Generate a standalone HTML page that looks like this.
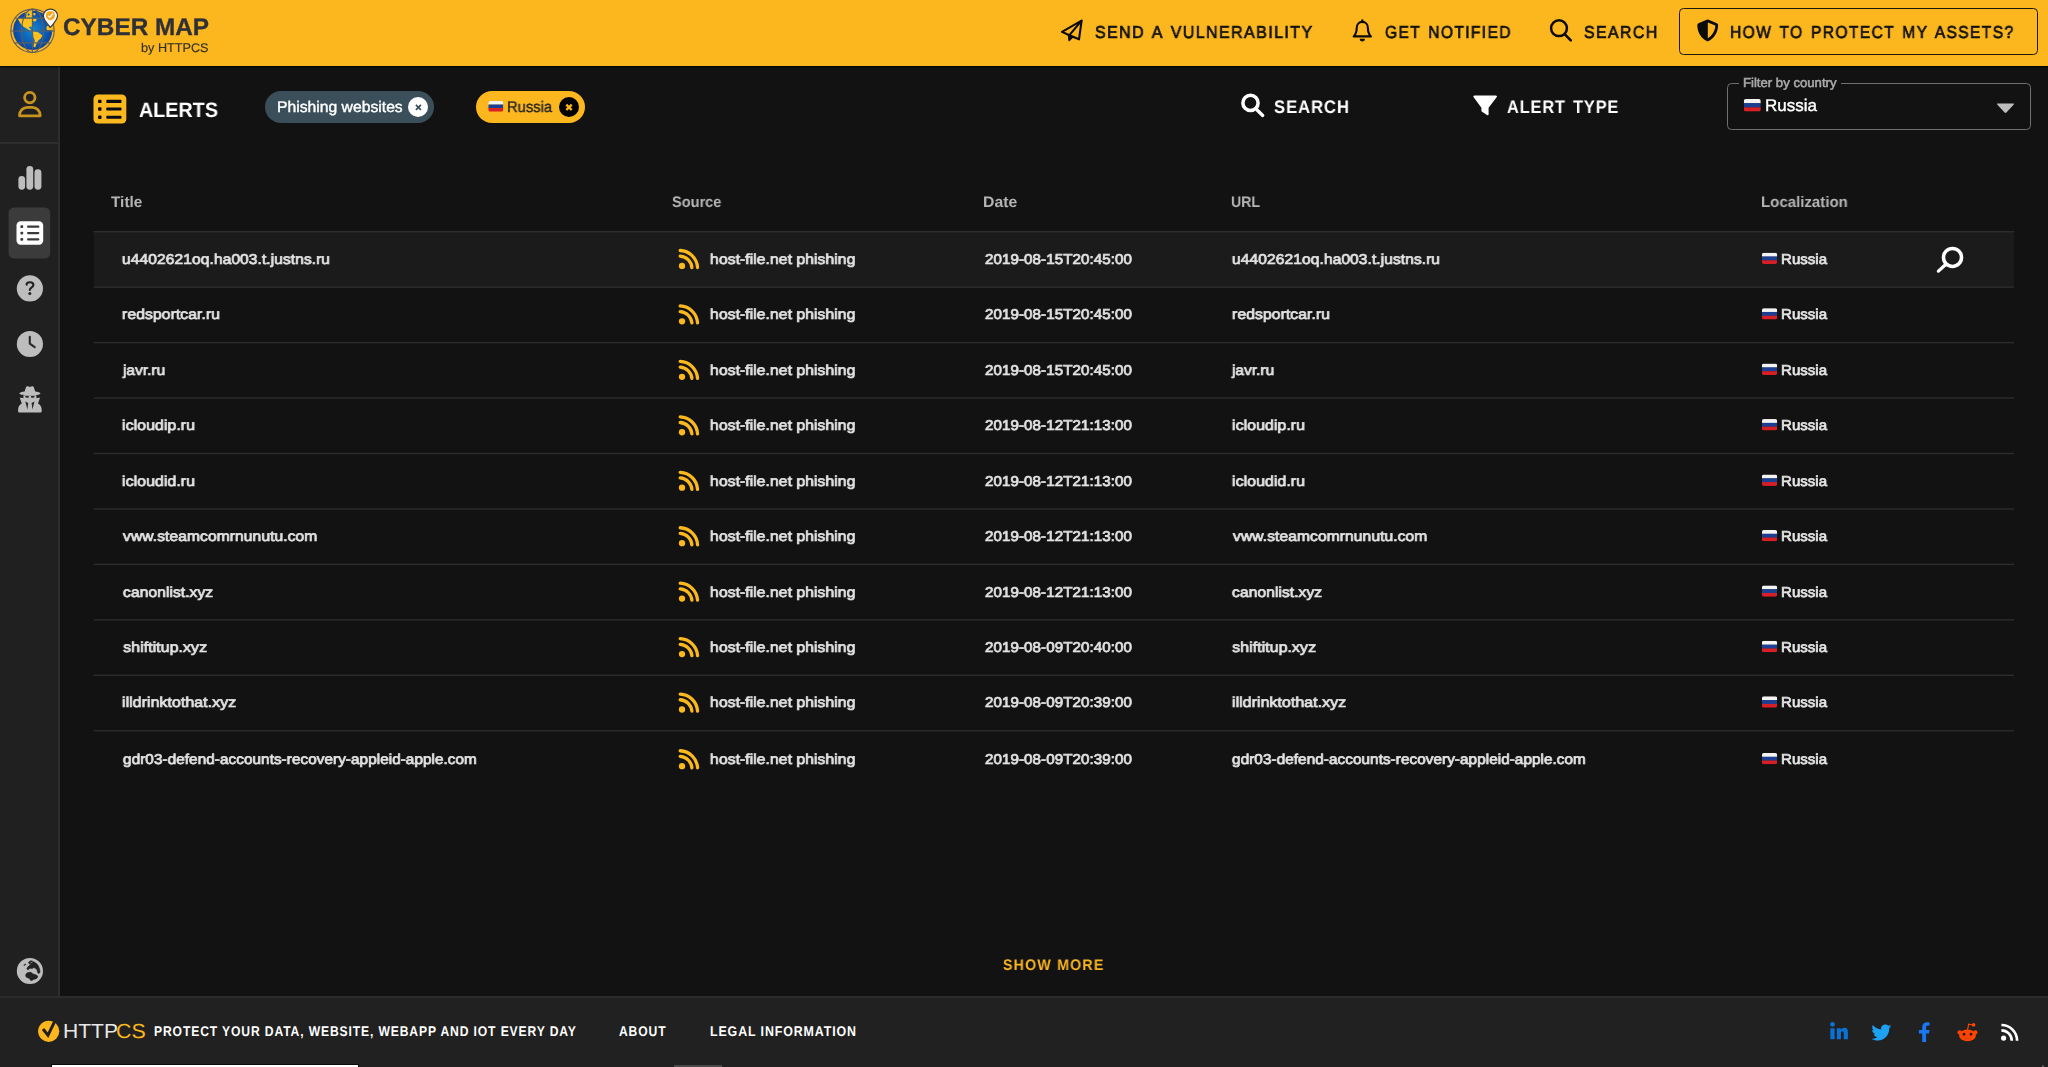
<!DOCTYPE html>
<html lang="en"><head><meta charset="utf-8"><title>Cyber Map - Alerts</title>
<style>
*{box-sizing:border-box}
html,body{margin:0;padding:0}
body{width:2048px;height:1067px;overflow:hidden;background:#121212;font-family:"Liberation Sans",sans-serif;position:relative}
.t{position:absolute;white-space:nowrap;line-height:1;transform-origin:0 50%;font-family:"Liberation Sans",sans-serif;text-rendering:geometricPrecision}
.g{will-change:transform}
.abs{position:absolute}
svg{position:absolute;overflow:visible}
#header{left:0;top:0;width:2048px;height:65.5px;background:#fcb61e;box-shadow:0 1px 2px rgba(0,0,0,.9)}
#sidebar{left:0;top:66px;width:60px;height:931px;background:#202020;border-right:2px solid #2d2d2d}
#sidesep{left:0;top:142.2px;width:58px;height:1.9px;background:#2e2e2e}
#sideact{left:9px;top:208px;width:41px;height:50px;background:#3a3a3a;border-radius:5px}
#footer{left:0;top:996px;width:2048px;height:71px;background:#212121;border-top:2px solid #2c2c2c}
#hbtn{left:1679px;top:8px;width:358.5px;height:47px;border:1.3px solid #1d1808;border-radius:4.5px}
.chip{height:32px;border-radius:16px;top:91px}
#chip1{left:265.3px;width:169.2px;background:#3b4f5b}
#chip2{left:476.3px;width:109px;background:#fcb61e}
.cx{width:20px;height:20px;border-radius:50%;top:97.3px}
#cx1{left:408.4px;background:#fff}
#cx2{left:559px;background:#000}
#sel{left:1727px;top:83.2px;width:304.2px;height:46.5px;border:1.2px solid #707070;border-radius:4.5px}
#selgap{left:1739px;top:80px;width:102px;height:6px;background:#121212}
.row{left:93.7px;width:1920.3px;height:1.7px;background:#292929}
#rowhov{left:93.7px;top:231.7px;width:1920.3px;height:55px;background:#1b1b1b}
#wbar{left:51.5px;top:1064.6px;width:306.5px;height:3px;background:#fff;box-shadow:0 0 0 1px #0b0b0b}
#gbar{left:674px;top:1065px;width:47.5px;height:3px;background:#4a4a4a}
#tick{left:2042.3px;top:1064.6px;width:2.1px;height:3px;background:#555}

</style></head>
<body>
<div class="abs" id="sidebar"></div>
<div class="abs" id="sidesep"></div>
<div class="abs" id="footer"></div>
<div class="abs" id="header"></div>
<div class="abs" id="hbtn"></div>
<div class="abs chip" id="chip1"></div>
<div class="abs chip" id="chip2"></div>
<div class="abs cx" id="cx1"></div>
<div class="abs cx" id="cx2"></div>
<div class="abs" id="sel"></div>
<div class="abs" id="selgap"></div>
<div class="abs" id="rowhov"></div>
<div class="abs" id="wbar"></div>
<div class="abs" id="gbar"></div>
<div class="abs" id="tick"></div>

<svg width="2048" height="1067" viewBox="0 0 2048 1067" style="left:0;top:0">
<defs>
<radialGradient id="gb" cx="0.5" cy="0.5" r="0.55"><stop offset="0" stop-color="#1486d3"/><stop offset="0.55" stop-color="#0b62b8"/><stop offset="1" stop-color="#0a3c98"/></radialGradient>
<clipPath id="gc"><circle cx="32.7" cy="30.3" r="19.6"/></clipPath>
</defs>
<!-- ===== header globe logo ===== -->
<g id="logo">
<circle cx="32.7" cy="30.3" r="19.6" fill="url(#gb)"/>
<g clip-path="url(#gc)" fill="#fcc11d">
<path d="M17.6 18.6 L19.6 18.3 L32.2 18.2 L32.2 26.8 L30.4 26.4 L28.8 27.2 L31.1 29.8 L30.5 30.8 L26.5 28.5 L23.6 26.8 L20.8 24 Z"/>
<path d="M24.9 13 L27.6 11.4 L30.2 10.2 L32.2 10.3 L32.2 17.4 L25.6 17.4 L26.6 15.2 Z"/>
<circle cx="28.6" cy="14.6" r="1.1" fill="#0b55ad"/>
<path d="M33.2 18.4 L36.8 19 L35.6 21.6 L33.2 21.2 Z"/>
<path d="M33.4 12.8 L35.8 13.4 L35 15.4 L33.2 15 Z"/>
<path d="M33 31.3 L37.5 32.1 L42.4 35.2 L41 38.2 L38.3 40.6 L36.4 44 L35.2 47.4 L33.6 46.8 L33.8 43.6 L34.8 40.6 L33.4 37 Z"/>
<path d="M47 26 L49.5 25 L53 27.5 L53 30.3 L47 30.3 L46.3 28 Z"/>
</g>
<g fill="none" stroke="#5e5e5e" stroke-width="1.1">
<circle cx="32.5" cy="30.8" r="21.7"/>
<ellipse cx="32.5" cy="30.8" rx="10.9" ry="21.7"/>
<path d="M32.4 9.1 V52.5 M10.8 31 H54.2 M15.2 18.3 H49.8 M15.2 42.9 H49.8"/>
</g>
<path d="M50.4 9.1 C54.3 9.1 57.5 12 57.5 15.9 C57.5 19.4 54.5 22.5 50.3 27.4 C46.2 22.5 43.4 19.4 43.4 15.9 C43.4 12 46.5 9.1 50.4 9.1 Z" fill="#fff" stroke="#3a3833" stroke-width="1.2"/>
<circle cx="50.4" cy="15.6" r="4.6" fill="#f7a823"/>
<path d="M48 15.6 L49.8 17.4 L52.9 13.7" fill="none" stroke="#fff" stroke-width="1.3"/>
</g>
<!-- ===== header nav icons ===== -->
<g fill="none" stroke="#0b0b0b" stroke-width="2.1" stroke-linejoin="round" stroke-linecap="round">
<path d="M1081.6 20.6 L1062 31.9 L1069.4 35.2 L1079 39.3 Z"/>
<path d="M1081.4 20.9 L1069.4 35.2"/>
<path d="M1068.4 35 L1069 40.7 L1072.8 37" fill="#111" stroke-width="1.2"/>
<path d="M1353.7 36.4 C1355.6 34.5 1356.7 32 1356.7 28 C1356.7 24.5 1359 21.9 1362.3 21.9 C1365.6 21.9 1367.9 24.5 1367.9 28 C1367.9 32 1369 34.5 1370.9 36.4 Z"/>
<path d="M1362.3 20.4 V22" stroke-width="2.3"/>
<circle cx="1559" cy="28.2" r="7.9" stroke-width="2.5"/>
<path d="M1564.9 34.4 L1570.8 40.4" stroke-width="2.6"/>
</g>
<path d="M1359.7 38.8 H1364.9 A2.6 2.6 0 0 1 1359.7 38.8 Z" fill="#111"/>
<path fill-rule="evenodd" fill="#0b0b0b" d="M1707.7 19.6 Q1708.2 19.6 1708.7 19.8 L1716.9 23.3 Q1718.1 23.9 1718.1 25.3 C1718.1 33.2 1713.2 38.9 1708.7 41.1 Q1707.7 41.5 1706.7 41.1 C1702.2 38.9 1697.3 33.2 1697.3 25.3 Q1697.3 23.9 1698.5 23.3 L1706.7 19.8 Q1707.2 19.6 1707.7 19.6 Z M1707.8 22.6 V38.4 C1711.6 36.2 1715.1 31.6 1715.3 25.6 Z"/>
<!-- ===== sidebar icons ===== -->
<g fill="none" stroke="#c8931f" stroke-width="2.8" stroke-linejoin="round">
<circle cx="29.8" cy="97.6" r="5.2"/>
<path d="M19.5 115.8 C19.5 110.6 23.4 107.3 27.4 107.3 L32.3 107.3 C36.3 107.3 40.2 110.6 40.2 115.8 Z"/>
</g>
<g fill="#bdbdbd">
<rect x="18.4" y="176" width="6.7" height="13.7" rx="3.35"/>
<rect x="26.4" y="165.9" width="6.8" height="23.8" rx="3.4"/>
<rect x="34.5" y="169.3" width="6.9" height="20.4" rx="3.45"/>
</g>
<!-- list active -->
<rect x="8.6" y="207.4" width="41.6" height="51.2" rx="5.5" fill="#3b3b3b"/>
<rect x="16.5" y="221.2" width="26.7" height="23.6" rx="4.2" fill="#fff"/>
<g fill="#3a3a3a">
<rect x="20.4" y="225.3" width="2.8" height="2.7" rx="0.8"/><rect x="20.4" y="231.7" width="2.8" height="2.7" rx="0.8"/><rect x="20.4" y="238.1" width="2.8" height="2.7" rx="0.8"/>
<rect x="27" y="225.5" width="12.4" height="2.3" rx="1.1"/><rect x="27" y="231.9" width="12.4" height="2.3" rx="1.1"/><rect x="27" y="238.3" width="12.4" height="2.3" rx="1.1"/>
</g>
<!-- question -->
<circle cx="29.9" cy="288.4" r="13.1" fill="#bdbdbd"/>
<path d="M26.6 284.6 C26.8 281.6 33.4 281.4 33.4 285 C33.4 287.4 29.8 287.4 29.8 290" fill="none" stroke="#222" stroke-width="2.1" stroke-linecap="round"/>
<circle cx="29.8" cy="293.6" r="1.5" fill="#222"/>
<!-- clock -->
<circle cx="29.9" cy="344" r="13.1" fill="#bdbdbd"/>
<path d="M29.8 336.8 V343.7 L34.7 347.2" fill="none" stroke="#2a2a2a" stroke-width="2.1" stroke-linecap="round" stroke-linejoin="round"/>
<!-- user secret -->
<g fill="#bdbdbd">
<path d="M24.6 391.6 L25.9 387.4 Q26.4 385.8 27.9 386.3 L29.9 387 L31.9 386.3 Q33.4 385.8 33.9 387.4 L35.2 391.6 C37.6 392 40.4 392.6 40.4 393.5 C40.4 394.7 35 395.4 29.9 395.4 C24.8 395.4 19.4 394.7 19.4 393.5 C19.4 392.6 22.2 392 24.6 391.6 Z"/>
<path d="M23.4 395.2 H36.4 V398 C36.4 401.5 33.6 403.6 29.9 403.6 C26.2 403.6 23.4 401.5 23.4 398 Z"/>
<path d="M19.8 397.8 L23.4 398 L26 401.5 L29.9 402.5 L33.8 401.5 L36.4 398 L40 397.8 L38 403.4 C40.3 404.6 41.7 407 41.7 409.6 V411.2 Q41.7 412.5 40.4 412.5 H19.4 Q18.1 412.5 18.1 411.2 V409.6 C18.1 407 19.5 404.6 21.8 403.4 Z"/>
</g>
<path d="M25.4 396 H28.8 V397.2 Q27.4 398.2 25.4 397.2 Z M31 396 H34.4 V397.2 Q32.4 398.2 31 397.2 Z" fill="#2a2a2a"/>
<path d="M25.3 401.6 L28.2 403 L27.4 409.5 Z M34.5 401.6 L31.6 403 L32.4 409.5 Z" fill="#262626"/>
<!-- bottom globe -->
<circle cx="29.9" cy="971" r="13.1" fill="#bdbdbd"/>
<g fill="#222" stroke="#222" stroke-width="0.6" stroke-linejoin="round">
<path d="M25.7 975 C26 973.6 27 972.8 27.6 972.7 C28.8 972.2 30 972.1 31 972.4 C32 972.8 32.4 973.6 33.2 973.9 C34.2 974.3 35.4 974.4 36.2 975 C37 975.4 37.8 975.8 37.7 976.5 C37.6 977.6 37 978.3 36.2 978.7 C35.2 979.2 34 979 33.2 979.5 C32.6 980 32.4 980.6 31.7 980.6 C31 980.6 30.5 980.4 30.2 979.9 C29.9 979.4 30 978.8 29.5 978.4 C28.6 977.9 27.4 977.8 26.5 977.2 C25.9 976.7 25.5 975.8 25.7 975 Z"/>
<path d="M28.7 962.2 C29.4 961.4 30.2 960.9 31 960.7 C32 960.9 33 961.3 34 961.9 C35.2 962.5 36.2 963.2 37 964.1 C38 965.2 38.8 966.5 39.2 967.9 C39.7 969.2 40 970.6 40 972 C39.8 972.8 39.4 973.4 38.9 973.5 C38.2 973.3 37.6 972.8 37.4 972 C37.2 971.2 37.4 970.4 37 969.7 C36.6 969.1 36 968.9 35.5 968.6 C35 968.2 34.6 967.6 34 967.5 C33.3 967.5 32.8 968.4 32.1 968.6 C31.5 968.7 30.8 968.1 30.2 968.2 C29.4 968.5 28.8 969.8 28 969.7 C27.2 969.5 26.7 969.1 26.9 968.6 C27.2 967.6 28 966.8 28.7 966 C29.5 965.2 30.5 964.5 31 963.7 C30.2 963.6 29.4 964 28.9 963.5 C28.5 963.1 28.5 962.6 28.7 962.2 Z"/>
<path d="M23.6 965 L25.4 963.8 L26 964.5 L24.2 965.7 Z" stroke-width="0.3"/>
</g>
<path d="M30.6 962.8 L32.6 961.9" stroke="#bdbdbd" stroke-width="0.7" fill="none"/>
<!-- ===== toolbar ===== -->
<rect x="93.5" y="94.5" width="32.8" height="29" rx="4.6" fill="#fcb91f"/>
<g fill="#0b0d16">
<rect x="98.1" y="99.7" width="3.4" height="3.4" rx="0.7"/><rect x="98.1" y="107.35" width="3.4" height="3.4" rx="0.7"/><rect x="98.1" y="115.6" width="3.4" height="3.4" rx="0.7"/>
<rect x="106.3" y="99.85" width="15.2" height="3.1" rx="0.8"/><rect x="106.3" y="107.5" width="15.2" height="3.1" rx="0.8"/><rect x="106.3" y="115.75" width="15.2" height="3.1" rx="0.8"/>
</g>
<g fill="none" stroke="#fff" stroke-linecap="round">
<circle cx="1250.5" cy="102.9" r="7.6" stroke-width="3.5"/>
<path d="M1256.6 109.6 L1262.7 115.4" stroke-width="3.4"/>
</g>
<path fill="#fff" d="M1474.6 95.6 H1495.7 Q1497.8 95.6 1496.6 97.3 L1488.6 107.7 V114.2 Q1488.6 116 1487 115 L1482 111.7 Q1481.4 111.3 1481.4 110.4 V107.7 L1473.7 97.3 Q1472.5 95.6 1474.6 95.6 Z"/>
<path fill="#bdbdbd" d="M1997.8 103.4 H2013.2 Q2014.8 103.4 2013.6 104.7 L2006.4 112.6 Q2005.5 113.5 2004.6 112.6 L1997.4 104.7 Q1996.2 103.4 1997.8 103.4 Z"/>
<!-- chip close x -->
<path d="M415.9 104.8 L420.9 109.8 M420.9 104.8 L415.9 109.8" stroke="#3b4f5b" stroke-width="1.7" fill="none"/>
<path d="M566.3 104.6 L571.7 110 M571.7 104.6 L566.3 110" stroke="#fcb61e" stroke-width="2.4" fill="none"/>
<!-- magnifier row1 -->
<g fill="none" stroke="#fff" stroke-linecap="round">
<circle cx="1952.5" cy="257.4" r="9" stroke-width="3.5"/>
<path d="M1945.4 264.7 L1938.4 271.1" stroke-width="3.3"/>
</g>
<!-- ===== footer ===== -->
<circle cx="48.7" cy="1031.3" r="10.6" fill="#fcb61e"/>
<path d="M43 1029 L48 1035.2 L54.6 1021.6" fill="none" stroke="#1f1f24" stroke-width="2.9"/>
<!-- linkedin -->
<g fill="#0a72d4">
<circle cx="1832.5" cy="1024.3" r="2.4"/>
<rect x="1830.4" y="1028.3" width="4.2" height="10.9"/>
<path d="M1836.9 1028.3 H1840.9 V1029.8 C1841.6 1028.6 1843 1027.8 1844.4 1027.8 C1847.2 1027.8 1847.9 1029.8 1847.9 1032.4 V1039.2 H1843.8 V1033.2 C1843.8 1032 1843.4 1031.2 1842.4 1031.2 C1841.4 1031.2 1840.9 1032 1840.9 1033.2 V1039.2 H1836.9 Z"/>
</g>
<!-- twitter -->
<path fill="#1da1f2" d="M1889.2 1028.3 C1889.2 1028.5 1889.2 1028.7 1889.2 1028.9 C1889.2 1034.3 1885.1 1040.5 1877.6 1040.5 C1875.3 1040.5 1873.2 1039.8 1871.4 1038.7 C1871.7 1038.7 1872 1038.8 1872.4 1038.8 C1874.3 1038.8 1876 1038.1 1877.4 1037 C1875.6 1037 1874.1 1035.8 1873.6 1034.2 C1874.2 1034.3 1874.8 1034.3 1875.4 1034.1 C1873.6 1033.7 1872.2 1032.1 1872.2 1030.1 C1872.7 1030.4 1873.4 1030.6 1874 1030.6 C1872.3 1029.4 1871.7 1027 1872.8 1025.1 C1874.8 1027.6 1877.8 1029.2 1881.2 1029.4 C1880.6 1026.8 1882.6 1024.4 1885.2 1024.4 C1886.4 1024.4 1887.4 1024.9 1888.2 1025.7 C1889.1 1025.5 1890 1025.2 1890.8 1024.7 C1890.5 1025.6 1889.9 1026.4 1889 1026.9 C1889.8 1026.8 1890.6 1026.6 1891.3 1026.3 C1890.8 1027.1 1890 1027.8 1889.2 1028.3 Z"/>
<!-- facebook -->
<path fill="#1877f2" d="M1922.2 1041.9 V1033.4 H1918.9 V1030.1 H1922.2 V1027.4 C1922.2 1024 1924.2 1022.2 1927.1 1022.2 C1928.2 1022.2 1929.1 1022.3 1929.6 1022.4 V1025.5 H1928 C1926.5 1025.5 1926.1 1026.3 1926.1 1027.3 V1030.1 H1929.5 L1929 1033.4 H1926.1 V1041.9 Z"/>
<!-- reddit -->
<g fill="#ff4500">
<ellipse cx="1967.5" cy="1035.4" rx="8.4" ry="5.9"/>
<circle cx="1959.6" cy="1032.4" r="2.1"/><circle cx="1975.4" cy="1032.4" r="2.1"/>
<circle cx="1973.6" cy="1024.9" r="1.8"/>
<path d="M1967.5 1030 L1968.7 1024.2 L1973 1025" fill="none" stroke="#ff4500" stroke-width="1.2"/>
</g>
<circle cx="1964" cy="1034.2" r="1.35" fill="#26140e"/><circle cx="1971" cy="1034.2" r="1.35" fill="#26140e"/>
<path d="M1964.4 1037.8 Q1967.5 1039.6 1970.6 1037.8" fill="none" stroke="#c93a08" stroke-width="0.9"/>
<!-- rss white -->
<g fill="none" stroke="#fff" stroke-width="2.7">
<path d="M2001.4 1025 A15.7 15.7 0 0 1 2017.1 1040.7"/>
<path d="M2001.4 1030.3 A10.4 10.4 0 0 1 2011.8 1040.7"/>
</g>
<circle cx="2003.6" cy="1038.1" r="2.6" fill="#fff"/>
<g transform="translate(0,0.0)"><g fill="none" stroke="#fcb91e" stroke-width="3.3" stroke-linecap="round"><path d="M680.2 250.52 A18.2 18.2 0 0 1 697.56 267.5"/><path d="M680.2 256.17 A12.56 12.56 0 0 1 691.9 267.5"/></g><circle cx="682" cy="265.9" r="3.15" fill="#fcb91e"/></g>
<g><clipPath id="fcr0"><rect x="1761.9" y="252.7" width="15.3" height="11.4" rx="2"/></clipPath><g clip-path="url(#fcr0)"><rect x="1761.9" y="252.7" width="15.3" height="4.00" fill="#f4f4f2"/><rect x="1761.9" y="256.50" width="15.3" height="4.00" fill="#1c3f94"/><rect x="1761.9" y="260.30" width="15.3" height="3.80" fill="#d91f26"/></g></g>
<g transform="translate(0,55.45)"><g fill="none" stroke="#fcb91e" stroke-width="3.3" stroke-linecap="round"><path d="M680.2 250.52 A18.2 18.2 0 0 1 697.56 267.5"/><path d="M680.2 256.17 A12.56 12.56 0 0 1 691.9 267.5"/></g><circle cx="682" cy="265.9" r="3.15" fill="#fcb91e"/></g>
<g><clipPath id="fcr1"><rect x="1761.9" y="308.15" width="15.3" height="11.4" rx="2"/></clipPath><g clip-path="url(#fcr1)"><rect x="1761.9" y="308.15" width="15.3" height="4.00" fill="#f4f4f2"/><rect x="1761.9" y="311.95" width="15.3" height="4.00" fill="#1c3f94"/><rect x="1761.9" y="315.75" width="15.3" height="3.80" fill="#d91f26"/></g></g>
<g transform="translate(0,110.9)"><g fill="none" stroke="#fcb91e" stroke-width="3.3" stroke-linecap="round"><path d="M680.2 250.52 A18.2 18.2 0 0 1 697.56 267.5"/><path d="M680.2 256.17 A12.56 12.56 0 0 1 691.9 267.5"/></g><circle cx="682" cy="265.9" r="3.15" fill="#fcb91e"/></g>
<g><clipPath id="fcr2"><rect x="1761.9" y="363.6" width="15.3" height="11.4" rx="2"/></clipPath><g clip-path="url(#fcr2)"><rect x="1761.9" y="363.6" width="15.3" height="4.00" fill="#f4f4f2"/><rect x="1761.9" y="367.40" width="15.3" height="4.00" fill="#1c3f94"/><rect x="1761.9" y="371.20" width="15.3" height="3.80" fill="#d91f26"/></g></g>
<g transform="translate(0,166.35000000000002)"><g fill="none" stroke="#fcb91e" stroke-width="3.3" stroke-linecap="round"><path d="M680.2 250.52 A18.2 18.2 0 0 1 697.56 267.5"/><path d="M680.2 256.17 A12.56 12.56 0 0 1 691.9 267.5"/></g><circle cx="682" cy="265.9" r="3.15" fill="#fcb91e"/></g>
<g><clipPath id="fcr3"><rect x="1761.9" y="419.05" width="15.3" height="11.4" rx="2"/></clipPath><g clip-path="url(#fcr3)"><rect x="1761.9" y="419.05" width="15.3" height="4.00" fill="#f4f4f2"/><rect x="1761.9" y="422.85" width="15.3" height="4.00" fill="#1c3f94"/><rect x="1761.9" y="426.65" width="15.3" height="3.80" fill="#d91f26"/></g></g>
<g transform="translate(0,221.8)"><g fill="none" stroke="#fcb91e" stroke-width="3.3" stroke-linecap="round"><path d="M680.2 250.52 A18.2 18.2 0 0 1 697.56 267.5"/><path d="M680.2 256.17 A12.56 12.56 0 0 1 691.9 267.5"/></g><circle cx="682" cy="265.9" r="3.15" fill="#fcb91e"/></g>
<g><clipPath id="fcr4"><rect x="1761.9" y="474.5" width="15.3" height="11.4" rx="2"/></clipPath><g clip-path="url(#fcr4)"><rect x="1761.9" y="474.5" width="15.3" height="4.00" fill="#f4f4f2"/><rect x="1761.9" y="478.30" width="15.3" height="4.00" fill="#1c3f94"/><rect x="1761.9" y="482.10" width="15.3" height="3.80" fill="#d91f26"/></g></g>
<g transform="translate(0,277.25)"><g fill="none" stroke="#fcb91e" stroke-width="3.3" stroke-linecap="round"><path d="M680.2 250.52 A18.2 18.2 0 0 1 697.56 267.5"/><path d="M680.2 256.17 A12.56 12.56 0 0 1 691.9 267.5"/></g><circle cx="682" cy="265.9" r="3.15" fill="#fcb91e"/></g>
<g><clipPath id="fcr5"><rect x="1761.9" y="529.95" width="15.3" height="11.4" rx="2"/></clipPath><g clip-path="url(#fcr5)"><rect x="1761.9" y="529.95" width="15.3" height="4.00" fill="#f4f4f2"/><rect x="1761.9" y="533.75" width="15.3" height="4.00" fill="#1c3f94"/><rect x="1761.9" y="537.55" width="15.3" height="3.80" fill="#d91f26"/></g></g>
<g transform="translate(0,332.70000000000005)"><g fill="none" stroke="#fcb91e" stroke-width="3.3" stroke-linecap="round"><path d="M680.2 250.52 A18.2 18.2 0 0 1 697.56 267.5"/><path d="M680.2 256.17 A12.56 12.56 0 0 1 691.9 267.5"/></g><circle cx="682" cy="265.9" r="3.15" fill="#fcb91e"/></g>
<g><clipPath id="fcr6"><rect x="1761.9" y="585.4000000000001" width="15.3" height="11.4" rx="2"/></clipPath><g clip-path="url(#fcr6)"><rect x="1761.9" y="585.4000000000001" width="15.3" height="4.00" fill="#f4f4f2"/><rect x="1761.9" y="589.20" width="15.3" height="4.00" fill="#1c3f94"/><rect x="1761.9" y="593.00" width="15.3" height="3.80" fill="#d91f26"/></g></g>
<g transform="translate(0,388.15000000000003)"><g fill="none" stroke="#fcb91e" stroke-width="3.3" stroke-linecap="round"><path d="M680.2 250.52 A18.2 18.2 0 0 1 697.56 267.5"/><path d="M680.2 256.17 A12.56 12.56 0 0 1 691.9 267.5"/></g><circle cx="682" cy="265.9" r="3.15" fill="#fcb91e"/></g>
<g><clipPath id="fcr7"><rect x="1761.9" y="640.85" width="15.3" height="11.4" rx="2"/></clipPath><g clip-path="url(#fcr7)"><rect x="1761.9" y="640.85" width="15.3" height="4.00" fill="#f4f4f2"/><rect x="1761.9" y="644.65" width="15.3" height="4.00" fill="#1c3f94"/><rect x="1761.9" y="648.45" width="15.3" height="3.80" fill="#d91f26"/></g></g>
<g transform="translate(0,443.6)"><g fill="none" stroke="#fcb91e" stroke-width="3.3" stroke-linecap="round"><path d="M680.2 250.52 A18.2 18.2 0 0 1 697.56 267.5"/><path d="M680.2 256.17 A12.56 12.56 0 0 1 691.9 267.5"/></g><circle cx="682" cy="265.9" r="3.15" fill="#fcb91e"/></g>
<g><clipPath id="fcr8"><rect x="1761.9" y="696.3" width="15.3" height="11.4" rx="2"/></clipPath><g clip-path="url(#fcr8)"><rect x="1761.9" y="696.3" width="15.3" height="4.00" fill="#f4f4f2"/><rect x="1761.9" y="700.10" width="15.3" height="4.00" fill="#1c3f94"/><rect x="1761.9" y="703.90" width="15.3" height="3.80" fill="#d91f26"/></g></g>
<g transform="translate(0,500.25)"><g fill="none" stroke="#fcb91e" stroke-width="3.3" stroke-linecap="round"><path d="M680.2 250.52 A18.2 18.2 0 0 1 697.56 267.5"/><path d="M680.2 256.17 A12.56 12.56 0 0 1 691.9 267.5"/></g><circle cx="682" cy="265.9" r="3.15" fill="#fcb91e"/></g>
<g><clipPath id="fcr9"><rect x="1761.9" y="752.95" width="15.3" height="11.4" rx="2"/></clipPath><g clip-path="url(#fcr9)"><rect x="1761.9" y="752.95" width="15.3" height="4.00" fill="#f4f4f2"/><rect x="1761.9" y="756.75" width="15.3" height="4.00" fill="#1c3f94"/><rect x="1761.9" y="760.55" width="15.3" height="3.80" fill="#d91f26"/></g></g>
<rect x="93.7" y="231.00" width="1920.3" height="1.4" fill="#2d2d2d"/>
<rect x="93.7" y="286.45" width="1920.3" height="1.4" fill="#2d2d2d"/>
<rect x="93.7" y="341.90" width="1920.3" height="1.4" fill="#2d2d2d"/>
<rect x="93.7" y="397.35" width="1920.3" height="1.4" fill="#2d2d2d"/>
<rect x="93.7" y="452.80" width="1920.3" height="1.4" fill="#2d2d2d"/>
<rect x="93.7" y="508.25" width="1920.3" height="1.4" fill="#2d2d2d"/>
<rect x="93.7" y="563.70" width="1920.3" height="1.4" fill="#2d2d2d"/>
<rect x="93.7" y="619.15" width="1920.3" height="1.4" fill="#2d2d2d"/>
<rect x="93.7" y="674.60" width="1920.3" height="1.4" fill="#2d2d2d"/>
<rect x="93.7" y="730.05" width="1920.3" height="1.4" fill="#2d2d2d"/>
<g><clipPath id="fcc"><rect x="488.3" y="100.9" width="15" height="10.8" rx="2"/></clipPath><g clip-path="url(#fcc)"><rect x="488.3" y="100.9" width="15" height="3.80" fill="#f4f4f2"/><rect x="488.3" y="104.50" width="15" height="3.80" fill="#1c3f94"/><rect x="488.3" y="108.10" width="15" height="3.60" fill="#d91f26"/></g></g>
<g><clipPath id="fcs"><rect x="1743.8" y="98.9" width="17" height="12.7" rx="2"/></clipPath><g clip-path="url(#fcs)"><rect x="1743.8" y="98.9" width="17" height="4.43" fill="#f4f4f2"/><rect x="1743.8" y="103.13" width="17" height="4.43" fill="#1c3f94"/><rect x="1743.8" y="107.37" width="17" height="4.23" fill="#d91f26"/></g></g>
</svg>

<span class="t g" id="cyber" style="left:62.56px;top:16.49px;font-size:24.1px;color:#2f3037;font-weight:700;-webkit-text-stroke:0.3px #2f3037;transform:rotate(0.001deg) scaleX(1.0105);">CYBER MAP</span>
<span class="t g" id="byh" style="left:140.97px;top:42.40px;font-size:12.6px;color:#322f25;-webkit-text-stroke:0.15px #322f25;transform:rotate(0.001deg) scaleX(1.0057);">by HTTPCS</span>
<span class="t g" id="h1" style="left:1094.68px;top:23.80px;font-size:17.3px;color:#111;letter-spacing:1.5px;-webkit-text-stroke:0.7px #111;word-spacing:2px;transform:rotate(0.001deg) scaleX(0.9272);">SEND A VULNERABILITY</span>
<span class="t g" id="h2" style="left:1385.09px;top:23.80px;font-size:17.3px;color:#111;letter-spacing:1.5px;-webkit-text-stroke:0.7px #111;word-spacing:2px;transform:rotate(0.001deg) scaleX(0.9018);">GET NOTIFIED</span>
<span class="t g" id="h3" style="left:1583.68px;top:23.80px;font-size:17.3px;color:#111;letter-spacing:1.5px;-webkit-text-stroke:0.7px #111;word-spacing:2px;transform:rotate(0.001deg) scaleX(0.9220);">SEARCH</span>
<span class="t g" id="h4" style="left:1729.94px;top:23.80px;font-size:17.3px;color:#111;letter-spacing:1.5px;-webkit-text-stroke:0.7px #111;word-spacing:2px;transform:rotate(0.001deg) scaleX(0.9030);">HOW TO PROTECT MY ASSETS?</span>
<span class="t g" id="alerts" style="left:139.40px;top:101.20px;font-size:20.9px;color:#fff;font-weight:700;transform:rotate(0.001deg) scaleX(0.9450);">ALERTS</span>
<span class="t g" id="c1" style="left:276.98px;top:99.79px;font-size:15.4px;color:#fff;-webkit-text-stroke:0.4px #fff;transform:rotate(0.001deg) scaleX(1.0205);">Phishing websites</span>
<span class="t g" id="c2" style="left:506.95px;top:99.79px;font-size:15.4px;color:#242424;-webkit-text-stroke:0.4px #242424;transform:rotate(0.001deg) scaleX(0.9592);">Russia</span>
<span class="t g" id="s1" style="left:1274.28px;top:98.20px;font-size:18.2px;color:#fff;font-weight:700;letter-spacing:1.0px;transform:rotate(0.001deg) scaleX(0.9160);">SEARCH</span>
<span class="t g" id="s2" style="left:1507.19px;top:98.20px;font-size:18.2px;color:#fff;font-weight:700;letter-spacing:1.0px;word-spacing:2px;transform:rotate(0.001deg) scaleX(0.8966);">ALERT TYPE</span>
<span class="t g" id="flab" style="left:1743.06px;top:77.10px;font-size:12.9px;color:#a9a9a9;-webkit-text-stroke:0.55px #a9a9a9;transform:rotate(0.001deg) scaleX(1.0200);">Filter by country</span>
<span class="t g" id="selv" style="left:1764.74px;top:98.49px;font-size:16.9px;color:#fff;-webkit-text-stroke:0.4px #fff;transform:rotate(0.001deg) scaleX(1.0056);">Russia</span>
<span class="t g" id="th1" style="left:111.15px;top:194.70px;font-size:15.3px;color:#b4b4b4;font-weight:700;transform:rotate(0.001deg) scaleX(1.0053);">Title</span>
<span class="t g" id="th2" style="left:672.21px;top:194.70px;font-size:15.3px;color:#b4b4b4;font-weight:700;transform:rotate(0.001deg) scaleX(0.9533);">Source</span>
<span class="t g" id="th3" style="left:983.26px;top:194.70px;font-size:15.3px;color:#b4b4b4;font-weight:700;transform:rotate(0.001deg) scaleX(1.0325);">Date</span>
<span class="t g" id="th4" style="left:1231.37px;top:194.70px;font-size:15.3px;color:#b4b4b4;font-weight:700;transform:rotate(0.001deg) scaleX(0.9265);">URL</span>
<span class="t g" id="th5" style="left:1760.91px;top:194.70px;font-size:15.3px;color:#b4b4b4;font-weight:700;transform:rotate(0.001deg) scaleX(0.9821);">Localization</span>
<span class="t g" id="r0a" style="left:122.40px;top:252.86px;font-size:14.3px;color:#e4e4e4;-webkit-text-stroke:0.7px #e4e4e4;transform:rotate(0.001deg) scaleX(1.0995);">u4402621oq.ha003.t.justns.ru</span>
<span class="t g" id="r0b" style="left:710.38px;top:252.86px;font-size:14.3px;color:#e4e4e4;-webkit-text-stroke:0.7px #e4e4e4;transform:rotate(0.001deg) scaleX(1.1085);">host-file.net phishing</span>
<span class="t g" id="r0c" style="left:984.77px;top:252.86px;font-size:14.3px;color:#e4e4e4;-webkit-text-stroke:0.7px #e4e4e4;transform:rotate(0.001deg) scaleX(1.0677);">2019-08-15T20:45:00</span>
<span class="t g" id="r0d" style="left:1231.90px;top:252.86px;font-size:14.3px;color:#e4e4e4;-webkit-text-stroke:0.7px #e4e4e4;transform:rotate(0.001deg) scaleX(1.0995);">u4402621oq.ha003.t.justns.ru</span>
<span class="t g" id="r0e" style="left:1780.99px;top:252.86px;font-size:14.3px;color:#e4e4e4;-webkit-text-stroke:0.7px #e4e4e4;transform:rotate(0.001deg) scaleX(1.0533);">Russia</span>
<span class="t g" id="r1a" style="left:122.32px;top:308.31px;font-size:14.3px;color:#e4e4e4;-webkit-text-stroke:0.7px #e4e4e4;transform:rotate(0.001deg) scaleX(1.1102);">redsportcar.ru</span>
<span class="t g" id="r1b" style="left:710.38px;top:308.31px;font-size:14.3px;color:#e4e4e4;-webkit-text-stroke:0.7px #e4e4e4;transform:rotate(0.001deg) scaleX(1.1085);">host-file.net phishing</span>
<span class="t g" id="r1c" style="left:984.77px;top:308.31px;font-size:14.3px;color:#e4e4e4;-webkit-text-stroke:0.7px #e4e4e4;transform:rotate(0.001deg) scaleX(1.0677);">2019-08-15T20:45:00</span>
<span class="t g" id="r1d" style="left:1231.82px;top:308.31px;font-size:14.3px;color:#e4e4e4;-webkit-text-stroke:0.7px #e4e4e4;transform:rotate(0.001deg) scaleX(1.1102);">redsportcar.ru</span>
<span class="t g" id="r1e" style="left:1780.99px;top:308.31px;font-size:14.3px;color:#e4e4e4;-webkit-text-stroke:0.7px #e4e4e4;transform:rotate(0.001deg) scaleX(1.0533);">Russia</span>
<span class="t g" id="r2a" style="left:122.91px;top:363.76px;font-size:14.3px;color:#e4e4e4;-webkit-text-stroke:0.7px #e4e4e4;transform:rotate(0.001deg) scaleX(1.0814);">javr.ru</span>
<span class="t g" id="r2b" style="left:710.38px;top:363.76px;font-size:14.3px;color:#e4e4e4;-webkit-text-stroke:0.7px #e4e4e4;transform:rotate(0.001deg) scaleX(1.1085);">host-file.net phishing</span>
<span class="t g" id="r2c" style="left:984.77px;top:363.76px;font-size:14.3px;color:#e4e4e4;-webkit-text-stroke:0.7px #e4e4e4;transform:rotate(0.001deg) scaleX(1.0677);">2019-08-15T20:45:00</span>
<span class="t g" id="r2d" style="left:1232.41px;top:363.76px;font-size:14.3px;color:#e4e4e4;-webkit-text-stroke:0.7px #e4e4e4;transform:rotate(0.001deg) scaleX(1.0814);">javr.ru</span>
<span class="t g" id="r2e" style="left:1780.99px;top:363.76px;font-size:14.3px;color:#e4e4e4;-webkit-text-stroke:0.7px #e4e4e4;transform:rotate(0.001deg) scaleX(1.0533);">Russia</span>
<span class="t g" id="r3a" style="left:122.34px;top:419.21px;font-size:14.3px;color:#e4e4e4;-webkit-text-stroke:0.7px #e4e4e4;transform:rotate(0.001deg) scaleX(1.1197);">icloudip.ru</span>
<span class="t g" id="r3b" style="left:710.38px;top:419.21px;font-size:14.3px;color:#e4e4e4;-webkit-text-stroke:0.7px #e4e4e4;transform:rotate(0.001deg) scaleX(1.1085);">host-file.net phishing</span>
<span class="t g" id="r3c" style="left:984.77px;top:419.21px;font-size:14.3px;color:#e4e4e4;-webkit-text-stroke:0.7px #e4e4e4;transform:rotate(0.001deg) scaleX(1.0677);">2019-08-12T21:13:00</span>
<span class="t g" id="r3d" style="left:1231.84px;top:419.21px;font-size:14.3px;color:#e4e4e4;-webkit-text-stroke:0.7px #e4e4e4;transform:rotate(0.001deg) scaleX(1.1197);">icloudip.ru</span>
<span class="t g" id="r3e" style="left:1780.99px;top:419.21px;font-size:14.3px;color:#e4e4e4;-webkit-text-stroke:0.7px #e4e4e4;transform:rotate(0.001deg) scaleX(1.0533);">Russia</span>
<span class="t g" id="r4a" style="left:122.34px;top:474.66px;font-size:14.3px;color:#e4e4e4;-webkit-text-stroke:0.7px #e4e4e4;transform:rotate(0.001deg) scaleX(1.1197);">icloudid.ru</span>
<span class="t g" id="r4b" style="left:710.38px;top:474.66px;font-size:14.3px;color:#e4e4e4;-webkit-text-stroke:0.7px #e4e4e4;transform:rotate(0.001deg) scaleX(1.1085);">host-file.net phishing</span>
<span class="t g" id="r4c" style="left:984.77px;top:474.66px;font-size:14.3px;color:#e4e4e4;-webkit-text-stroke:0.7px #e4e4e4;transform:rotate(0.001deg) scaleX(1.0677);">2019-08-12T21:13:00</span>
<span class="t g" id="r4d" style="left:1231.84px;top:474.66px;font-size:14.3px;color:#e4e4e4;-webkit-text-stroke:0.7px #e4e4e4;transform:rotate(0.001deg) scaleX(1.1197);">icloudid.ru</span>
<span class="t g" id="r4e" style="left:1780.99px;top:474.66px;font-size:14.3px;color:#e4e4e4;-webkit-text-stroke:0.7px #e4e4e4;transform:rotate(0.001deg) scaleX(1.0533);">Russia</span>
<span class="t g" id="r5a" style="left:123.26px;top:530.11px;font-size:14.3px;color:#e4e4e4;-webkit-text-stroke:0.7px #e4e4e4;transform:rotate(0.001deg) scaleX(1.1015);">vww.steamcomrnunutu.com</span>
<span class="t g" id="r5b" style="left:710.38px;top:530.11px;font-size:14.3px;color:#e4e4e4;-webkit-text-stroke:0.7px #e4e4e4;transform:rotate(0.001deg) scaleX(1.1085);">host-file.net phishing</span>
<span class="t g" id="r5c" style="left:984.77px;top:530.11px;font-size:14.3px;color:#e4e4e4;-webkit-text-stroke:0.7px #e4e4e4;transform:rotate(0.001deg) scaleX(1.0677);">2019-08-12T21:13:00</span>
<span class="t g" id="r5d" style="left:1232.76px;top:530.11px;font-size:14.3px;color:#e4e4e4;-webkit-text-stroke:0.7px #e4e4e4;transform:rotate(0.001deg) scaleX(1.1015);">vww.steamcomrnunutu.com</span>
<span class="t g" id="r5e" style="left:1780.99px;top:530.11px;font-size:14.3px;color:#e4e4e4;-webkit-text-stroke:0.7px #e4e4e4;transform:rotate(0.001deg) scaleX(1.0533);">Russia</span>
<span class="t g" id="r6a" style="left:122.73px;top:585.56px;font-size:14.3px;color:#e4e4e4;-webkit-text-stroke:0.7px #e4e4e4;transform:rotate(0.001deg) scaleX(1.1002);">canonlist.xyz</span>
<span class="t g" id="r6b" style="left:710.38px;top:585.56px;font-size:14.3px;color:#e4e4e4;-webkit-text-stroke:0.7px #e4e4e4;transform:rotate(0.001deg) scaleX(1.1085);">host-file.net phishing</span>
<span class="t g" id="r6c" style="left:984.77px;top:585.56px;font-size:14.3px;color:#e4e4e4;-webkit-text-stroke:0.7px #e4e4e4;transform:rotate(0.001deg) scaleX(1.0677);">2019-08-12T21:13:00</span>
<span class="t g" id="r6d" style="left:1232.23px;top:585.56px;font-size:14.3px;color:#e4e4e4;-webkit-text-stroke:0.7px #e4e4e4;transform:rotate(0.001deg) scaleX(1.1002);">canonlist.xyz</span>
<span class="t g" id="r6e" style="left:1780.99px;top:585.56px;font-size:14.3px;color:#e4e4e4;-webkit-text-stroke:0.7px #e4e4e4;transform:rotate(0.001deg) scaleX(1.0533);">Russia</span>
<span class="t g" id="r7a" style="left:122.80px;top:641.01px;font-size:14.3px;color:#e4e4e4;-webkit-text-stroke:0.7px #e4e4e4;transform:rotate(0.001deg) scaleX(1.1259);">shiftitup.xyz</span>
<span class="t g" id="r7b" style="left:710.38px;top:641.01px;font-size:14.3px;color:#e4e4e4;-webkit-text-stroke:0.7px #e4e4e4;transform:rotate(0.001deg) scaleX(1.1085);">host-file.net phishing</span>
<span class="t g" id="r7c" style="left:984.77px;top:641.01px;font-size:14.3px;color:#e4e4e4;-webkit-text-stroke:0.7px #e4e4e4;transform:rotate(0.001deg) scaleX(1.0677);">2019-08-09T20:40:00</span>
<span class="t g" id="r7d" style="left:1232.30px;top:641.01px;font-size:14.3px;color:#e4e4e4;-webkit-text-stroke:0.7px #e4e4e4;transform:rotate(0.001deg) scaleX(1.1259);">shiftitup.xyz</span>
<span class="t g" id="r7e" style="left:1780.99px;top:641.01px;font-size:14.3px;color:#e4e4e4;-webkit-text-stroke:0.7px #e4e4e4;transform:rotate(0.001deg) scaleX(1.0533);">Russia</span>
<span class="t g" id="r8a" style="left:122.34px;top:696.46px;font-size:14.3px;color:#e4e4e4;-webkit-text-stroke:0.7px #e4e4e4;transform:rotate(0.001deg) scaleX(1.1215);">illdrinktothat.xyz</span>
<span class="t g" id="r8b" style="left:710.38px;top:696.46px;font-size:14.3px;color:#e4e4e4;-webkit-text-stroke:0.7px #e4e4e4;transform:rotate(0.001deg) scaleX(1.1085);">host-file.net phishing</span>
<span class="t g" id="r8c" style="left:984.77px;top:696.46px;font-size:14.3px;color:#e4e4e4;-webkit-text-stroke:0.7px #e4e4e4;transform:rotate(0.001deg) scaleX(1.0677);">2019-08-09T20:39:00</span>
<span class="t g" id="r8d" style="left:1231.84px;top:696.46px;font-size:14.3px;color:#e4e4e4;-webkit-text-stroke:0.7px #e4e4e4;transform:rotate(0.001deg) scaleX(1.1215);">illdrinktothat.xyz</span>
<span class="t g" id="r8e" style="left:1780.99px;top:696.46px;font-size:14.3px;color:#e4e4e4;-webkit-text-stroke:0.7px #e4e4e4;transform:rotate(0.001deg) scaleX(1.0533);">Russia</span>
<span class="t g" id="r9a" style="left:122.74px;top:753.11px;font-size:14.3px;color:#e4e4e4;-webkit-text-stroke:0.7px #e4e4e4;transform:rotate(0.001deg) scaleX(1.0782);">gdr03-defend-accounts-recovery-appleid-apple.com</span>
<span class="t g" id="r9b" style="left:710.38px;top:753.11px;font-size:14.3px;color:#e4e4e4;-webkit-text-stroke:0.7px #e4e4e4;transform:rotate(0.001deg) scaleX(1.1085);">host-file.net phishing</span>
<span class="t g" id="r9c" style="left:984.77px;top:753.11px;font-size:14.3px;color:#e4e4e4;-webkit-text-stroke:0.7px #e4e4e4;transform:rotate(0.001deg) scaleX(1.0677);">2019-08-09T20:39:00</span>
<span class="t g" id="r9d" style="left:1232.24px;top:753.11px;font-size:14.3px;color:#e4e4e4;-webkit-text-stroke:0.7px #e4e4e4;transform:rotate(0.001deg) scaleX(1.0782);">gdr03-defend-accounts-recovery-appleid-apple.com</span>
<span class="t g" id="r9e" style="left:1780.99px;top:753.11px;font-size:14.3px;color:#e4e4e4;-webkit-text-stroke:0.7px #e4e4e4;transform:rotate(0.001deg) scaleX(1.0533);">Russia</span>
<span class="t g" id="more" style="left:1003.32px;top:958.30px;font-size:15.4px;color:#f9b41f;font-weight:700;letter-spacing:1.3px;transform:rotate(0.001deg) scaleX(0.9229);">SHOW MORE</span>
<span class="t" id="f0" style="left:62.61px;top:1022px;font-size:20.4px;color:#e8e8e8;transform:scaleX(1.0337);">HTTP</span>
<span class="t" id="f0b" style="left:116.20px;top:1022px;font-size:20.4px;color:#fcb61e;transform:scaleX(1.0461);">CS</span>
<span class="t" id="f1" style="left:153.80px;top:1024px;font-size:14.1px;color:#fff;font-weight:700;letter-spacing:1px;transform:scaleX(0.8614);">PROTECT YOUR DATA, WEBSITE, WEBAPP AND IOT EVERY DAY</span>
<span class="t" id="f2" style="left:619.39px;top:1024px;font-size:14.1px;color:#fff;font-weight:700;letter-spacing:1px;transform:scaleX(0.8603);">ABOUT</span>
<span class="t" id="f3" style="left:710.29px;top:1024px;font-size:14.1px;color:#fff;font-weight:700;letter-spacing:1px;transform:scaleX(0.8804);">LEGAL INFORMATION</span>
</body></html>
